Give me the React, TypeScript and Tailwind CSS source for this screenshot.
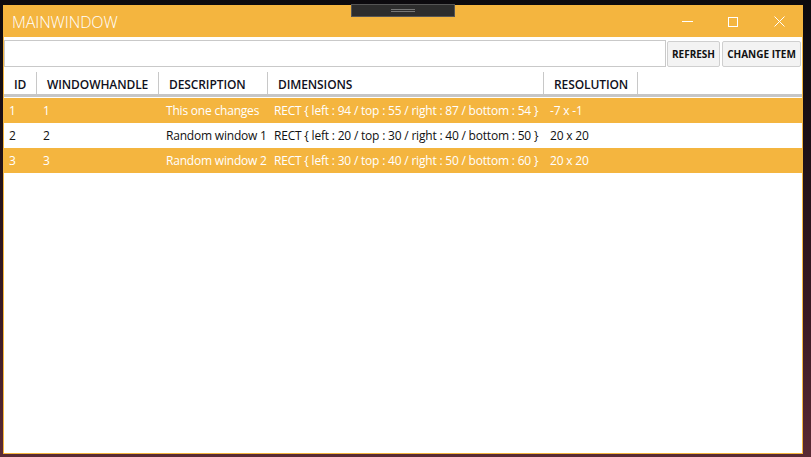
import React from "react";

const ORANGE = "bg-[#f4b53f]";

type Row = { id: string; handle: string; desc: string; dim: string; res: string };

const rows: Row[] = [
  { id: "1", handle: "1", desc: "This one changes", dim: "RECT { left : 94 / top : 55 / right : 87 / bottom : 54 }", res: "-7 x -1" },
  { id: "2", handle: "2", desc: "Random window 1", dim: "RECT { left : 20 / top : 30 / right : 40 / bottom : 50 }", res: "20 x 20" },
  { id: "3", handle: "3", desc: "Random window 2", dim: "RECT { left : 30 / top : 40 / right : 50 / bottom : 60 }", res: "20 x 20" },
];

const cols = [
  { label: "ID", w: "w-[33px]" },
  { label: "WINDOWHANDLE", w: "w-[122px]" },
  { label: "DESCRIPTION", w: "w-[109px]" },
  { label: "DIMENSIONS", w: "w-[276px]" },
  { label: "RESOLUTION", w: "w-[94px]" },
];

export default function App() {
  return (
    <div
      className="relative w-[811px] h-[457px] overflow-hidden bg-[linear-gradient(180deg,#0c0a0e_0%,#1c1016_30%,#3a1a24_70%,#5a2a34_100%)]"
      style={{ fontFamily: '"Open Sans", "Noto Sans", sans-serif' }}
    >
      {/* window */}
      <div className="ml-[3px] mt-[5px] w-[800px] h-[449px] border border-[#f4b53f] bg-white flex flex-col">
        {/* title bar */}
        <div className={`${ORANGE} h-[31px] flex items-center shrink-0`}>
          <div className="pl-[8px] text-white text-[16px] font-light tracking-[-0.1px] leading-none pt-[1px]">MAINWINDOW</div>
          <div className="ml-auto flex items-center h-full">
            <div className="w-[46px] h-full flex items-center justify-center">
              <svg width="11" height="11" viewBox="0 0 11 11">
                <line x1="0" y1="5.5" x2="11" y2="5.5" stroke="white" strokeWidth="1" />
              </svg>
            </div>
            <div className="w-[46px] h-full flex items-center justify-center">
              <svg width="10" height="10" viewBox="0 0 10 10">
                <rect x="0.5" y="0.5" width="9" height="9" fill="none" stroke="white" strokeWidth="1" />
              </svg>
            </div>
            <div className="w-[46px] h-full flex items-center justify-center">
              <svg width="11" height="11" viewBox="0 0 11 11">
                <path d="M0.5 0.5 L10.5 10.5 M10.5 0.5 L0.5 10.5" stroke="white" strokeWidth="1" />
              </svg>
            </div>
          </div>
        </div>

        {/* toolbar */}
        <div className="flex items-start pt-[3px] h-[31px] shrink-0">
          <div className="flex-1 h-[27px] border border-[#c9c9c9] bg-white" />
          <button className="ml-[1px] mt-[1px] h-[26px] w-[53px] rounded-[2px] border border-[#cfcfcf] bg-[#f3f3f3] text-[10px] font-bold text-[#111] leading-none flex items-center justify-center">
            REFRESH
          </button>
          <button className="ml-[2px] mr-[1px] mt-[1px] h-[26px] w-[79px] rounded-[2px] border border-[#cfcfcf] bg-[#f3f3f3] text-[10px] font-bold text-[#111] leading-none flex items-center justify-center">
            CHANGE ITEM
          </button>
        </div>

        {/* table header */}
        <div className="flex h-[29px] shrink-0 border-b-[3px] border-[#c6c6c6]">
          {cols.map((c) => (
            <div key={c.label} className={`${c.w} shrink-0 flex items-center pt-[7px] pl-[10px]`}>
              <div className="flex-1 text-[12px] font-semibold text-[#101020] whitespace-nowrap tracking-[-0.1px]">{c.label}</div>
              <div className="w-[1px] h-[22px] bg-[#c8c8c8] self-end" />
            </div>
          ))}
          <div className="flex-1" />
        </div>

        {/* rows */}
        <div className="flex flex-col pt-[1px]">
          {rows.map((r, i) => {
            const sel = i % 2 === 0;
            return (
              <div
                key={r.id}
                className={`flex h-[25px] items-center text-[12px] tracking-[-0.2px] whitespace-nowrap ${sel ? "bg-[#f4b53f] text-white" : "bg-white text-[#111]"}`}
              >
                <div className="w-[33px] pl-[5px] shrink-0">{r.id}</div>
                <div className="w-[122px] pl-[6px] shrink-0">{r.handle}</div>
                <div className="w-[109px] pl-[7px] shrink-0">{r.desc}</div>
                <div className="w-[276px] pl-[6px] shrink-0">{r.dim}</div>
                <div className="w-[94px] pl-[6px] shrink-0">{r.res}</div>
                <div className="flex-1" />
              </div>
            );
          })}
        </div>
      </div>

      {/* top grip overlay */}
      <div className="absolute left-[351px] top-[4px] w-[104px] h-[13px] bg-[#2d2d2d] border border-[#555] flex flex-col items-center justify-center gap-[1px]">
        <div className="w-[24px] h-[1px] bg-[#777]" />
        <div className="w-[24px] h-[1px] bg-[#777]" />
      </div>
    </div>
  );
}
